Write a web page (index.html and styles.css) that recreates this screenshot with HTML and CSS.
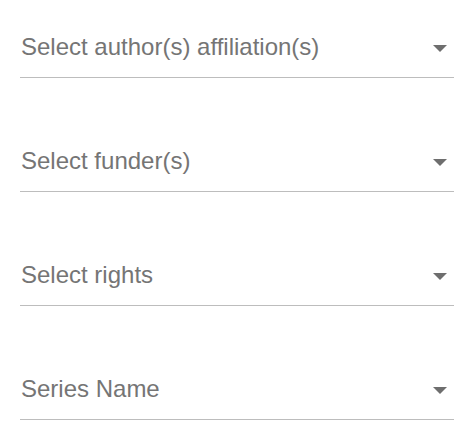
FILE: index.html
```html
<!DOCTYPE html>
<html>
<head>
<meta charset="utf-8">
<link rel="stylesheet" href="styles.css">
</head>
<body>
<div class="form">
  <div class="field">
    <span class="label">Select author(s) affiliation(s)</span>
    <svg class="arrow" width="14" height="7" viewBox="0 0 14 7"><polygon points="0,0 14,0 7,7"/></svg>
  </div>
  <div class="field">
    <span class="label">Select funder(s)</span>
    <svg class="arrow" width="14" height="7" viewBox="0 0 14 7"><polygon points="0,0 14,0 7,7"/></svg>
  </div>
  <div class="field">
    <span class="label">Select rights</span>
    <svg class="arrow" width="14" height="7" viewBox="0 0 14 7"><polygon points="0,0 14,0 7,7"/></svg>
  </div>
  <div class="field">
    <span class="label">Series Name</span>
    <svg class="arrow" width="14" height="7" viewBox="0 0 14 7"><polygon points="0,0 14,0 7,7"/></svg>
  </div>
</div>
</body>
</html>
```
FILE: styles.css
```css
html, body {
  margin: 0;
  padding: 0;
  background: #fff;
}
.form {
  padding: 17px 20px 0 20px;
  display: flex;
  flex-direction: column;
  gap: 53px;
}
.field {
  height: 60px;
  display: flex;
  align-items: center;
  justify-content: space-between;
  border-bottom: 1px solid #bdbdbd;
}
.label {
  font-family: "Liberation Sans", Arial, sans-serif;
  font-size: 24px;
  color: #757575;
  padding-left: 1px;
}
.arrow {
  fill: #6e6e6e;
  margin-right: 7px;
  margin-top: 3px;
}
```
